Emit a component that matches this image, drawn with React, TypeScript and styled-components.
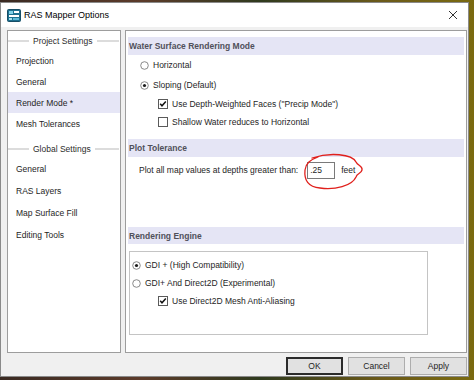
import styled, { createGlobalStyle } from "styled-components";

const GlobalStyle = createGlobalStyle`
    html, body {
        margin: 0;
        padding: 0;
        height: 100%;
        overflow: hidden;
    }
    body {
        background: linear-gradient(90deg, #3a2a22 0%, #5c3b2a 30%, #2f3a1e 55%, #6b5a1a 80%, #7a6a10 100%);
        font-family: "Liberation Sans", Arial, sans-serif;
        font-size: 8.5px;
        color: #1e1e1e;
    }
`;

const Window = styled.div`
    box-sizing: border-box;
    width: 469px;
    height: 375px;
    margin-top: 2px;
    background: #f0f0f0;
    border: 1px solid #8a8a8a;
    display: flex;
    flex-direction: column;
`;

const TitleBar = styled.div`
    height: 24px;
    background: #ffffff;
    display: flex;
    align-items: center;
    padding: 0 6px 0 6px;
    gap: 3px;
`;

const TitleText = styled.span`
    flex: 1;
    font-size: 9px;
    color: #000;
`;

const Content = styled.div`
    display: flex;
    gap: 4px;
    padding: 3px 1px 0 6px;
    height: 323px;
`;

const NavPanel = styled.div`
    box-sizing: border-box;
    width: 114px;
    background: #fff;
    border: 1px solid #9d9d9d;
    padding-top: 1px;
    display: flex;
    flex-direction: column;
`;

const NavHeading = styled.div<{ $gap?: number }>`
    height: 18px;
    margin-top: ${(p) => p.$gap ?? 0}px;
    display: flex;
    align-items: center;
    gap: 4px;
    padding: 0 1px 0 0;
    color: #2c2c2c;
    &::before,
    &::after {
        content: "";
        flex: 1;
        height: 2px;
        background: #dcdcdc;
    }
    &::before {
        flex: 0 0 21px;
    }
`;

const NavItem = styled.div<{ $active?: boolean; $h?: number }>`
    height: ${(p) => p.$h ?? 21}px;
    display: flex;
    align-items: center;
    padding-left: 8px;
    background: ${(p) => (p.$active ? "#e6e6f6" : "transparent")};
    color: #1e1e1e;
`;

const SettingsPanel = styled.div`
    box-sizing: border-box;
    flex: 1;
    background: #fff;
    border: 1px solid #9d9d9d;
    padding: 6px 2px 0 2px;
    display: flex;
    flex-direction: column;
`;

const SectionHeader = styled.div<{ $gap?: number; $h?: number }>`
    height: ${(p) => p.$h ?? 18}px;
    margin-top: ${(p) => p.$gap ?? 0}px;
    background: #e5e5f5;
    display: flex;
    align-items: center;
    padding-left: 1px;
    font-weight: bold;
    color: #50505a;
`;

const OptionRow = styled.div<{ $indent: number; $h?: number }>`
    height: ${(p) => p.$h ?? 18}px;
    display: flex;
    align-items: center;
    padding-left: ${(p) => p.$indent}px;
    gap: 4px;
`;

const ToleranceRow = styled.div`
    position: relative;
    height: 20px;
    margin-top: 3px;
    display: flex;
    align-items: center;
    padding-left: 11px;
`;

const ValueInput = styled.input`
    box-sizing: border-box;
    width: 28px;
    height: 17px;
    margin: 0 6px 0 9px;
    border: 1px solid #7a7a7a;
    padding: 0 0 0 2px;
    font-family: "Liberation Sans", Arial, sans-serif;
    font-size: 8.5px;
    color: #1e1e1e;
    background: #fff;
    outline: none;
`;

const Annotation = styled.svg`
    position: absolute;
    left: 172px;
    top: -8px;
    pointer-events: none;
`;

const GroupBox = styled.div`
    box-sizing: border-box;
    width: 299px;
    height: 84px;
    margin: 7px 0 0 1px;
    border: 1px solid #c4c4c4;
    padding-top: 4px;
`;

const Footer = styled.div`
    display: flex;
    justify-content: flex-end;
    gap: 5px;
    padding: 4px 1px 0 0;
`;

const DialogButton = styled.button<{ $primary?: boolean }>`
    box-sizing: border-box;
    width: 57px;
    height: 18px;
    background: #e1e1e1;
    border: ${(p) => (p.$primary ? "2px solid #2b2b2b" : "1px solid #adadad")};
    font-family: "Liberation Sans", Arial, sans-serif;
    font-size: 8.5px;
    color: #1e1e1e;
    padding: 0;
`;

function AppIcon() {
    return (
        <svg width="14" height="13" viewBox="0 0 14 13">
            <rect x="0.5" y="0.5" width="13" height="12" rx="1" fill="#1d6f8f" stroke="#174e66" />
            <rect x="2" y="2" width="4" height="3" fill="#7fd0e8" />
            <rect x="7" y="2" width="5" height="2" fill="#ffffff" />
            <rect x="2" y="6" width="10" height="2" fill="#ffffff" />
            <rect x="2" y="9" width="3" height="2" fill="#9be0f0" />
            <rect x="6" y="9" width="6" height="2" fill="#5cb8d6" />
        </svg>
    );
}

function CloseIcon() {
    return (
        <svg width="10" height="10" viewBox="0 0 10 10" style={{ marginRight: 4 }}>
            <path d="M1 1 L9 9 M9 1 L1 9" stroke="#333" strokeWidth="1" fill="none" />
        </svg>
    );
}

function Radio({ checked }: { checked?: boolean }) {
    return (
        <svg width="9" height="9" viewBox="0 0 9 9">
            <circle cx="4.5" cy="4.5" r="3.8" fill="#fff" stroke="#7d7d7d" strokeWidth="0.9" />
            {checked && <circle cx="4.5" cy="4.5" r="1.6" fill="#1c1c1c" />}
        </svg>
    );
}

function Checkbox({ checked }: { checked?: boolean }) {
    return (
        <svg width="10" height="10" viewBox="0 0 10 10">
            <rect x="0.5" y="0.5" width="9" height="9" fill="#fff" stroke="#5a5a5a" />
            {checked && <path d="M2.2 4.8 L4 6.8 L7.8 2.6" stroke="#111" strokeWidth="1.5" fill="none" />}
        </svg>
    );
}

export default function App() {
    return (
        <>
            <GlobalStyle />
            <Window>
                <TitleBar>
                    <AppIcon />
                    <TitleText>RAS Mapper Options</TitleText>
                    <CloseIcon />
                </TitleBar>
                <Content>
                    <NavPanel>
                        <NavHeading>Project Settings</NavHeading>
                        <NavItem>Projection</NavItem>
                        <NavItem>General</NavItem>
                        <NavItem $active>Render Mode *</NavItem>
                        <NavItem $h={22}>Mesh Tolerances</NavItem>
                        <NavHeading $gap={5}>Global Settings</NavHeading>
                        <NavItem $h={22}>General</NavItem>
                        <NavItem $h={22}>RAS Layers</NavItem>
                        <NavItem $h={22}>Map Surface Fill</NavItem>
                        <NavItem $h={22}>Editing Tools</NavItem>
                    </NavPanel>
                    <SettingsPanel>
                        <SectionHeader>Water Surface Rendering Mode</SectionHeader>
                        <OptionRow $indent={12} $h={20}>
                            <Radio />
                            Horizontal
                        </OptionRow>
                        <OptionRow $indent={12} $h={20}>
                            <Radio checked />
                            Sloping (Default)
                        </OptionRow>
                        <OptionRow $indent={30}>
                            <Checkbox checked />
                            Use Depth-Weighted Faces ("Precip Mode")
                        </OptionRow>
                        <OptionRow $indent={30}>
                            <Checkbox />
                            Shallow Water reduces to Horizontal
                        </OptionRow>
                        <SectionHeader $gap={8}>Plot Tolerance</SectionHeader>
                        <ToleranceRow>
                            Plot all map values at depths greater than:
                            <ValueInput value=".25" readOnly />
                            feet
                            <Annotation width="70" height="44" viewBox="0 0 70 44">
                                <path
                                    d="M12 6 C30 0, 52 2, 56 10 C58 14, 63 14, 62 18 C61 22, 57 21, 56 25 C52 34, 35 38, 20 36 C8 35, 4 28, 5 18 C6 11, 10 8, 18 5"
                                    stroke="#e0201c"
                                    strokeWidth="1.3"
                                    fill="none"
                                    strokeLinecap="round"
                                />
                            </Annotation>
                        </ToleranceRow>
                        <SectionHeader $gap={47} $h={17}>
                            Rendering Engine
                        </SectionHeader>
                        <GroupBox>
                            <OptionRow $indent={2}>
                                <Radio checked />
                                GDI + (High Compatibility)
                            </OptionRow>
                            <OptionRow $indent={2}>
                                <Radio />
                                GDI+ And Direct2D (Experimental)
                            </OptionRow>
                            <OptionRow $indent={28}>
                                <Checkbox checked />
                                Use Direct2D Mesh Anti-Aliasing
                            </OptionRow>
                        </GroupBox>
                    </SettingsPanel>
                </Content>
                <Footer>
                    <DialogButton $primary>OK</DialogButton>
                    <DialogButton>Cancel</DialogButton>
                    <DialogButton>Apply</DialogButton>
                </Footer>
            </Window>
        </>
    );
}
